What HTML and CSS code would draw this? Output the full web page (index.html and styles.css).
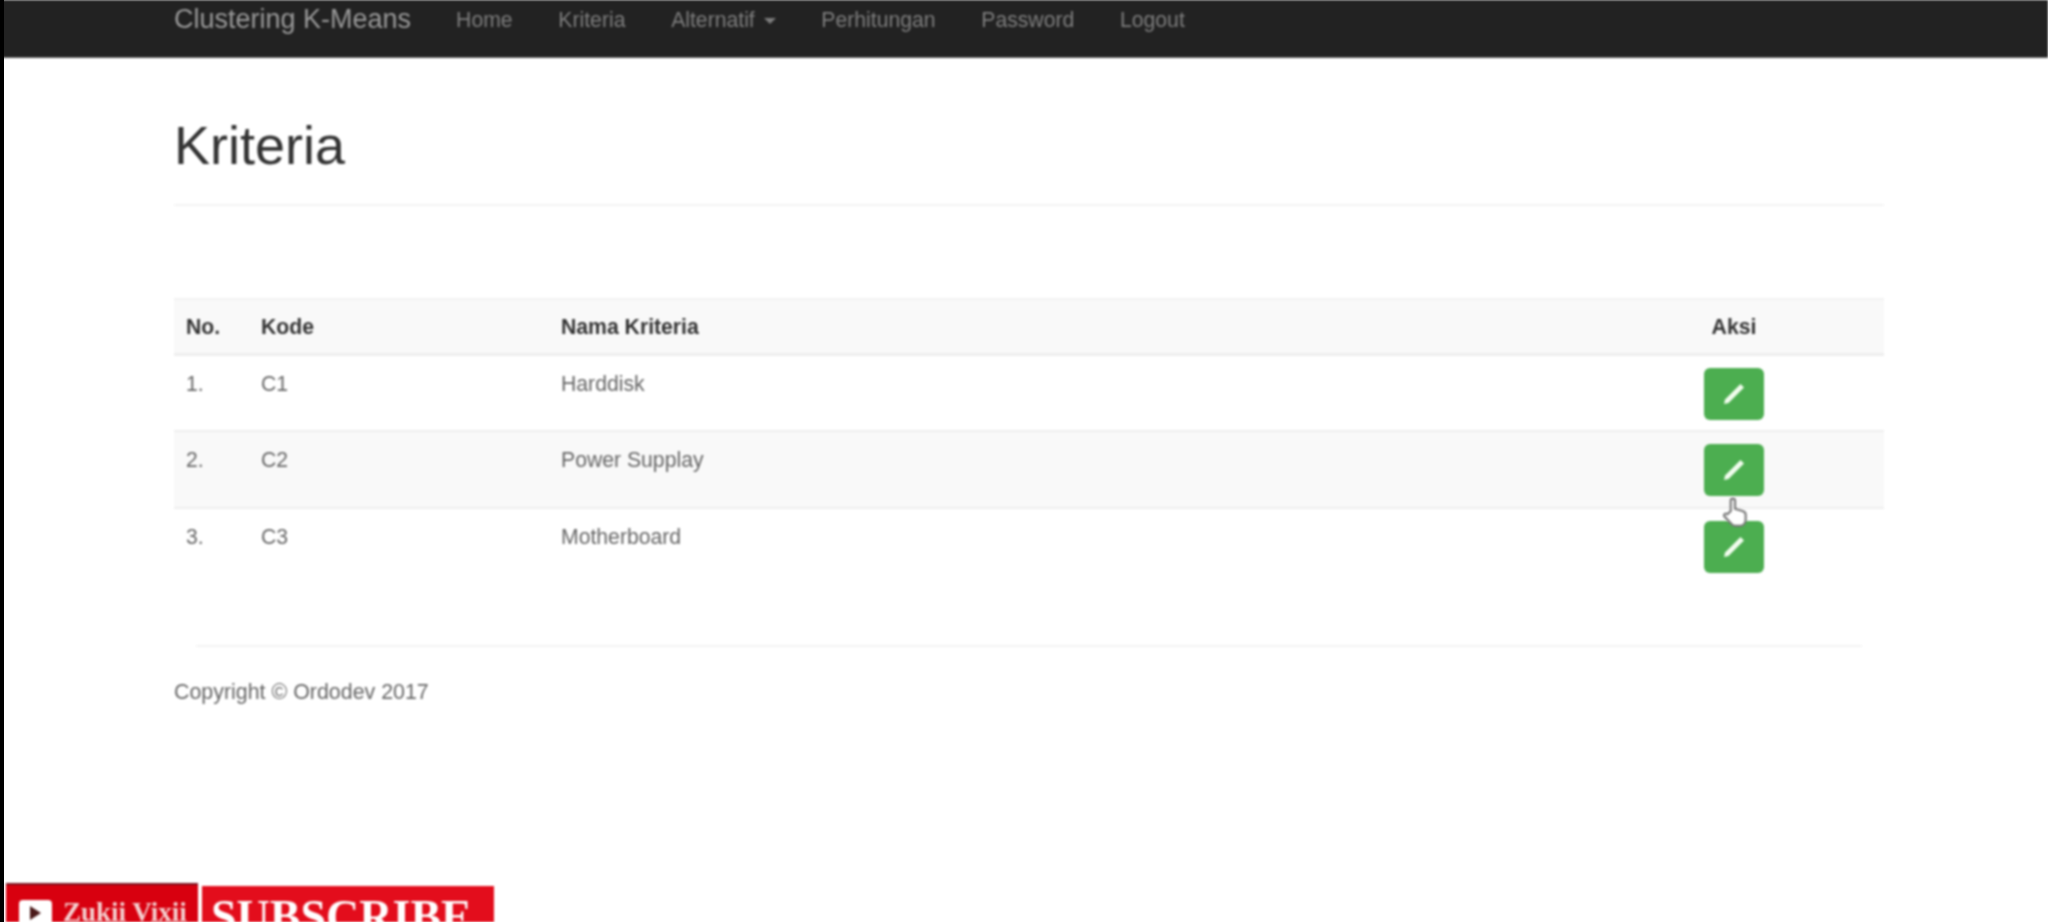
FILE: index.html
```html
<!DOCTYPE html>
<html lang="id">
<head>
  <meta charset="UTF-8" />
  <title>Kriteria</title>
  <link rel="stylesheet" href="styles.css">
</head>
<body>
  <nav class="navbar">
    <a class="brand" href="#">Clustering K-Means</a>
    <a class="nav-link" href="#">Home</a>
    <a class="nav-link" href="#">Kriteria</a>
    <a class="nav-link" href="#">Alternatif <span class="caret"></span></a>
    <a class="nav-link" href="#">Perhitungan</a>
    <a class="nav-link" href="#">Password</a>
    <a class="nav-link" href="#">Logout</a>
  </nav>

  <main class="container">
    <h1 class="page-title">Kriteria</h1>

    <table class="tabel">
      <thead>
        <tr>
          <th class="col-no">No.</th>
          <th class="col-kode">Kode</th>
          <th>Nama Kriteria</th>
          <th class="col-aksi">Aksi</th>
        </tr>
      </thead>
      <tbody>
        <tr>
          <td>1.</td>
          <td>C1</td>
          <td>Harddisk</td>
          <td class="col-aksi">
            <a class="btn-edit" href="#"><svg viewBox="0 0 24 24" class="pencil"><path d="M2 22l1-4.500L18.500 2l3.500 3.500L6.500 21z"/></svg></a>
          </td>
        </tr>
        <tr>
          <td>2.</td>
          <td>C2</td>
          <td>Power Supplay</td>
          <td class="col-aksi">
            <a class="btn-edit" href="#"><svg viewBox="0 0 24 24" class="pencil"><path d="M2 22l1-4.500L18.500 2l3.500 3.500L6.500 21z"/></svg></a>
          </td>
        </tr>
        <tr>
          <td>3.</td>
          <td>C3</td>
          <td>Motherboard</td>
          <td class="col-aksi">
            <a class="btn-edit" href="#"><svg viewBox="0 0 24 24" class="pencil"><path d="M2 22l1-4.500L18.500 2l3.500 3.500L6.500 21z"/></svg></a>
          </td>
        </tr>
      </tbody>
    </table>

    <hr class="footer-line" />
    <p class="copyright">Copyright © Ordodev 2017</p>
  </main>

  <svg class="cursor" viewBox="0 0 24 30">
    <path d="M8 14V4.500a2 2 0 0 1 4 0V12l7 2c2 .6 3 1.600 3 3.500V22c0 3-2 6-5 6h-5c-2 0-3-1-4-2.500L2 19c-1-1.500 1-3.500 3-2z" fill="#fff" stroke="#777" stroke-width="2"/>
  </svg>

  <div class="subscribe">
    <div class="channel">
      <span class="play"><span class="play-arrow"></span></span>
      <span class="channel-name">Zukii Vixii</span>
    </div>
    <div class="subscribe-label">SUBSCRIBE</div>
  </div>
</body>
</html>
```
FILE: styles.css
```css
* {
  box-sizing: border-box;
}

html,
body {
  height: 100%;
  margin: 0;
}

body {
  position: relative;
  overflow: hidden;
  background-color: #fff;
  border-left: 4px solid #000;
  font-family: "Liberation Sans", Arial, sans-serif;
  font-size: 21.2px;
  color: #555;
}

.navbar {
  display: flex;
  align-items: center;
  height: 58px;
  margin-left: -4px;
  padding: 0 0 18px 174px;
  background-color: #222;
  border-bottom: 1px solid #666;
  filter: blur(1px);
}

.brand {
  margin-right: 45px;
  font-size: 27px;
  color: #999;
  text-decoration: none;
}

.nav-link {
  margin-right: 45.700px;
  color: #7d7d7d;
  text-decoration: none;
}

.caret {
  display: inline-block;
  margin-left: 3px;
  vertical-align: middle;
  border-top: 6px solid #7d7d7d;
  border-left: 6px solid transparent;
  border-right: 6px solid transparent;
}

.container {
  width: 1710px;
  margin-left: 170px;
  filter: blur(0.9px);
}

.page-title {
  margin: 0;
  padding: 57px 0 22px;
  height: 148px;
  font-size: 54px;
  font-weight: normal;
  line-height: 60px;
  color: #333;
  border-bottom: 2px solid #f4f4f4;
}

.tabel {
  width: 100%;
  margin-top: 92px;
  border-collapse: collapse;
  table-layout: fixed;
}

.tabel th,
.tabel td {
  padding: 12px;
  text-align: left;
  vertical-align: top;
  line-height: 30px;
}

.tabel th {
  height: 55px;
  padding-top: 12px;
  padding-bottom: 9px;
  font-weight: bold;
  color: #333;
  background-color: #f9f9f9;
  border-top: 2px solid #f2f2f2;
  border-bottom: 3px solid #eee;
}

.tabel td {
  height: 77px;
  padding-top: 13px;
  padding-bottom: 0;
  color: #666;
}

.tabel .col-aksi .btn-edit {
  margin-top: -1px;
}

.tabel tbody tr:nth-child(even) td {
  background-color: #f9f9f9;
}

.tabel tbody tr + tr td {
  border-top: 2px solid #eee;
}

.tabel .col-no {
  width: 75px;
}

.tabel .col-kode {
  width: 300px;
}

.tabel .col-aksi {
  width: 300px;
  text-align: center;
}

.btn-edit {
  display: inline-flex;
  align-items: center;
  justify-content: center;
  width: 60px;
  height: 52px;
  background-color: #4cae50;
  border-radius: 6px;
}

.pencil {
  width: 24px;
  height: 24px;
  fill: #f2fdee;
}

.footer-line {
  width: 1666px;
  height: 2px;
  margin: 60px auto 0;
  background-color: #f4f4f4;
  border: 0;
}

.copyright {
  margin: 30px 0 0;
  font-size: 21.400px;
  line-height: 30px;
  color: #666;
}

.cursor {
  position: absolute;
  left: 1718px;
  top: 496px;
  width: 26px;
  height: 32px;
  filter: blur(1px);
}

.subscribe {
  position: absolute;
  left: 2px;
  bottom: 0;
  display: flex;
  align-items: flex-start;
  gap: 4px;
  height: 39px;
  filter: blur(1px);
}

.channel {
  display: flex;
  align-items: flex-start;
  gap: 11px;
  width: 192px;
  height: 39px;
  padding: 15px 0 0 13px;
  background-color: #d8000f;
  border-top: 2px solid #7a1420;
}

.play {
  display: flex;
  align-items: center;
  justify-content: center;
  width: 33px;
  height: 26px;
  background-color: #fff;
  border-radius: 4px;
}

.play-arrow {
  border-left: 11px solid #4a1a1a;
  border-top: 7px solid transparent;
  border-bottom: 7px solid transparent;
}

.channel-name {
  font-family: "Liberation Serif", serif;
  font-size: 27px;
  line-height: 24px;
  font-weight: bold;
  color: #f4d0d0;
  white-space: nowrap;
}

.subscribe-label {
  width: 292px;
  height: 36px;
  margin-top: 3px;
  padding: 8px 0 0 9px;
  overflow: hidden;
  background-color: #e30d1c;
  font-family: "Liberation Serif", serif;
  font-size: 46px;
  font-weight: bold;
  line-height: 46px;
  color: #fff;
  white-space: nowrap;
}
```
